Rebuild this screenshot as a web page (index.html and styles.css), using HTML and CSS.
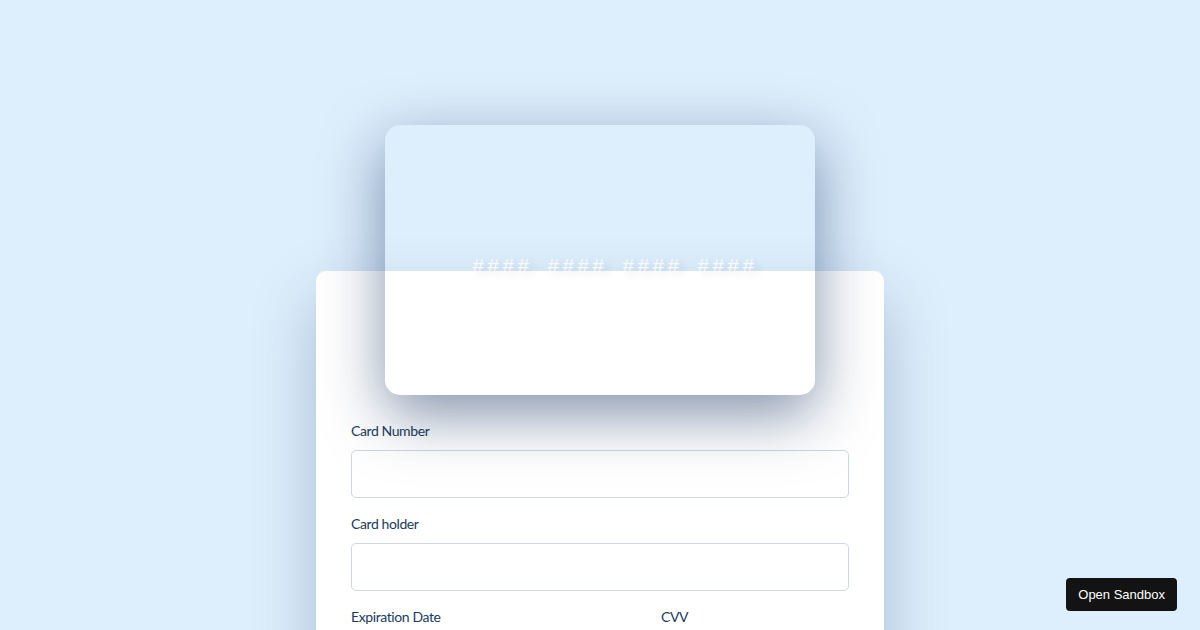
FILE: index.html
```html
<!DOCTYPE html>
<html lang="en">
<head>
<meta charset="utf-8">
<title>Card Form</title>
<link rel="stylesheet" href="styles.css">
</head>
<body>
<div class="wrapper">
  <div class="card-form">
    <div class="card-item">
      <div class="card-number">#### #### #### ####</div>
    </div>
    <div class="form-inner">
      <div class="field">
        <label class="label">Card Number</label>
        <input class="input" type="text">
      </div>
      <div class="field">
        <label class="label">Card holder</label>
        <input class="input" type="text">
      </div>
      <div class="row">
        <div class="col-exp">
          <label class="label">Expiration Date</label>
        </div>
        <div class="col-cvv">
          <label class="label">CVV</label>
        </div>
      </div>
    </div>
  </div>
</div>
<a class="sandbox-btn">Open Sandbox</a>
</body>
</html>
```
FILE: styles.css
```css
html, body {
  margin: 0;
  padding: 0;
  height: 100%;
  overflow: hidden;
}
body {
  background: #ddeefc;
  font-family: Lato, "Noto Sans", sans-serif;
}
.wrapper {
  padding-top: 125px;
}
.card-form {
  width: 568px;
  margin: 0 auto;
}
.card-item {
  position: relative;
  z-index: 2;
  width: 430px;
  height: 270px;
  margin: 0 auto;
  border-radius: 15px;
  box-shadow: 0 20px 60px 0 rgba(14, 42, 90, 0.5);
  box-sizing: border-box;
  padding: 127px 0 0 87px;
}
.card-number {
  font-family: "Liberation Mono", "DejaVu Sans Mono", monospace;
  font-size: 21px;
  line-height: 30px;
  letter-spacing: 2.4px;
  color: rgba(255, 255, 255, 0.85);
  white-space: pre;
  text-shadow: 5px 4px 8px rgba(14, 42, 90, 0.12);
}
.form-inner {
  position: relative;
  z-index: 1;
  margin-top: -124px;
  background: #fff;
  border-radius: 10px;
  box-shadow: 0 30px 60px 0 rgba(90, 116, 148, 0.4);
  padding: 154px 35px 35px;
}
.field {
  margin-bottom: 20px;
}
.label {
  display: block;
  font-size: 14px;
  line-height: 12px;
  margin-bottom: 13px;
  letter-spacing: -0.4px;
  color: #1a3b5d;
}
.input {
  display: block;
  width: 100%;
  height: 48px;
  box-sizing: border-box;
  border: 1px solid #ced6e0;
  border-radius: 5px;
  padding: 5px 15px;
  font-size: 18px;
  outline: none;
  background: #fff;
}
.row {
  display: flex;
}
.col-exp {
  flex: 1;
  margin-right: 35px;
}
.col-cvv {
  width: 188px;
}
.sandbox-btn {
  position: fixed;
  right: 23px;
  bottom: 19px;
  height: 33px;
  box-sizing: border-box;
  padding: 0 12px;
  display: flex;
  align-items: center;
  background: #131313;
  color: #fff;
  border-radius: 4px;
  font-family: "Liberation Sans", Arial, sans-serif;
  font-size: 13px;
}
```
